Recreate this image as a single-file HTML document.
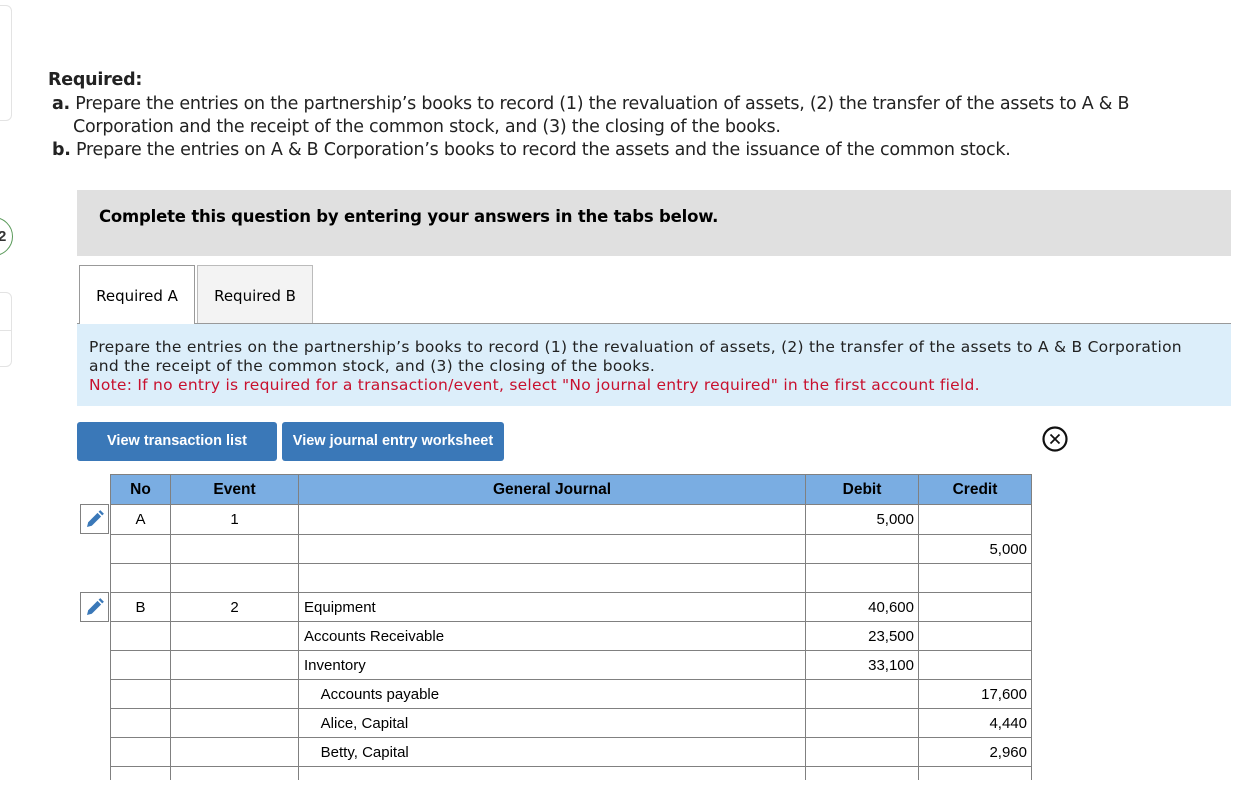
<!DOCTYPE html>
<html><head><meta charset="utf-8"><style>
*{margin:0;padding:0;box-sizing:border-box}
html,body{width:1255px;height:789px;overflow:hidden}
body{background:#fff;position:relative;font-family:"Liberation Sans",Arial,sans-serif;color:#000}
.a{position:absolute}
.q{font-family:"DejaVu Sans","Liberation Sans",sans-serif;font-size:17.5px;color:#222;letter-spacing:-0.25px}
.v{font-family:"DejaVu Sans",sans-serif;font-size:15.5px}
.btn{position:absolute;top:422px;height:39px;background:#3a78b8;border-radius:3px;color:#fff;font-weight:bold;font-size:14.5px;line-height:39px;text-align:center}
.c{position:absolute;border:1px solid #808080;font-size:15px;line-height:30px}
.h{background:#7aade2;font-weight:bold;text-align:center;font-size:15.5px;line-height:29px}
.pen{position:absolute;width:29px;height:30px;border:1px solid #808080;background:#fff}
</style></head><body>
<div class="a" style="left:-10px;top:5px;width:22px;height:116px;border:1px solid #e3e3e3;border-radius:6px"></div>
<div class="a" style="left:-26px;top:217px;width:39px;height:39px;border:1px solid #5a9a5a;border-radius:50%"></div>
<div class="a" style="left:-2px;top:228px;font-weight:bold;font-size:15px;color:#333">2</div>
<div class="a" style="left:-10px;top:292px;width:22px;height:75px;border:1px solid #e3e3e3;border-radius:6px"></div>
<div class="a" style="left:-10px;top:330px;width:22px;height:1px;background:#e3e3e3"></div>

<div class="a q" style="left:48px;top:70px;font-weight:bold">Required:</div>
<div class="a q" style="left:52px;top:94px"><b>a.</b> Prepare the entries on the partnership’s books to record (1) the revaluation of assets, (2) the transfer of the assets to A &amp; B</div>
<div class="a q" style="left:73px;top:117px">Corporation and the receipt of the common stock, and (3) the closing of the books.</div>
<div class="a q" style="left:52px;top:140px"><b>b.</b> Prepare the entries on A &amp; B Corporation’s books to record the assets and the issuance of the common stock.</div>

<div class="a" style="left:77px;top:190px;width:1154px;height:66px;background:#e0e0e0"></div>
<div class="a v" style="left:99px;top:207px;font-weight:bold;font-size:16.5px;letter-spacing:-0.2px">Complete this question by entering your answers in the tabs below.</div>

<div class="a" style="left:77px;top:323px;width:1154px;height:1px;background:#999"></div>
<div class="a v" style="left:79px;top:265px;width:116px;height:60px;border:1px solid #999;border-bottom:none;background:#fff;text-align:center;line-height:60px;font-size:15px">Required A</div>
<div class="a v" style="left:197px;top:265px;width:116px;height:58px;border:1px solid #bbb;border-bottom:none;background:#f3f3f3;text-align:center;line-height:60px;font-size:15px">Required B</div>
<div class="a" style="left:77px;top:324px;width:1154px;height:82px;background:#dceefa"></div>
<div class="a v" style="left:89px;top:338px;line-height:19px;color:#222;width:1110px;font-size:15.5px;letter-spacing:0.25px">Prepare the entries on the partnership’s books to record (1) the revaluation of assets, (2) the transfer of the assets to A &amp; B Corporation and the receipt of the common stock, and (3) the closing of the books.<br><span style="color:#c8102e">Note: If no entry is required for a transaction/event, select "No journal entry required" in the first account field.</span></div>

<div class="btn" style="left:77px;width:200px">View transaction list</div>
<div class="btn" style="left:282px;width:222px">View journal entry worksheet</div>
<svg class="a" style="left:1041px;top:425px" width="28" height="28" viewBox="0 0 28 28"><circle cx="14" cy="14" r="11.5" fill="none" stroke="#111" stroke-width="2.2"/><path d="M9.5 9.5L18.5 18.5M18.5 9.5L9.5 18.5" stroke="#111" stroke-width="1.8"/></svg>

<div class="c h" style="left:110px;top:474px;width:61px;height:31px">No</div>
<div class="c h" style="left:170px;top:474px;width:129px;height:31px">Event</div>
<div class="c h" style="left:298px;top:474px;width:508px;height:31px">General Journal</div>
<div class="c h" style="left:805px;top:474px;width:114px;height:31px">Debit</div>
<div class="c h" style="left:918px;top:474px;width:114px;height:31px">Credit</div>

<div id="rows"></div>
<script>
var ys=[504,534,563,592,621,650,679,708,737,766];
var d=[["A","1","","5,000",""],["","","","","5,000"],["","","","",""],["B","2","Equipment","40,600",""],["","","Accounts Receivable","23,500",""],["","","Inventory","33,100",""],["","","&nbsp;&nbsp;&nbsp;&nbsp;Accounts payable","","17,600"],["","","&nbsp;&nbsp;&nbsp;&nbsp;Alice, Capital","","4,440"],["","","&nbsp;&nbsp;&nbsp;&nbsp;Betty, Capital","","2,960"],["","","","",""]];
var xs=[[110,61,"text-align:center"],[170,129,"text-align:center"],[298,508,"padding-left:5px"],[805,114,"text-align:right;padding-right:4px"],[918,114,"text-align:right;padding-right:4px"]];
var h="";
for(var i=0;i<ys.length;i++){var y=ys[i],hh=(i<9?ys[i+1]-y+1:20);
for(var j=0;j<5;j++){h+='<div class="c" style="left:'+xs[j][0]+'px;top:'+y+'px;width:'+xs[j][1]+'px;height:'+hh+'px;'+xs[j][2]+'">'+d[i][j]+'</div>';}
if(i==0||i==3){h+='<div class="pen" style="left:80px;top:'+y+'px"><svg width="27" height="28" viewBox="0 0 27 28"><path d="M6 22L7.2 17.2L16.5 7.9L20.1 11.5L10.8 20.8Z" fill="#3a78b8"/><path d="M17.6 6.8L19.3 5.1L22.9 8.7L21.2 10.4Z" fill="#3a78b8"/></svg></div>';}
}
document.getElementById("rows").innerHTML=h;
</script>
<div class="a" style="left:0;top:780px;width:1255px;height:20px;background:#fff;z-index:5"></div>
</body></html>
